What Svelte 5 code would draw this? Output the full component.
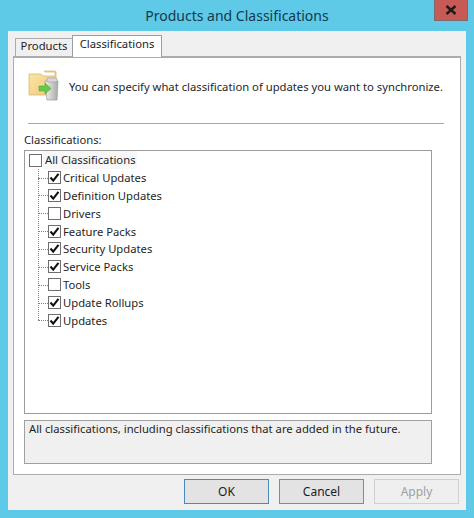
<script>
  const items = [
    ['Critical Updates', true],
    ['Definition Updates', true],
    ['Drivers', false],
    ['Feature Packs', true],
    ['Security Updates', true],
    ['Service Packs', true],
    ['Tools', false],
    ['Update Rollups', true],
    ['Updates', true]
  ];
</script>

<div class="window">
  <header class="titlebar">
    <span class="title">Products and Classifications</span>
    <button class="close" aria-label="Close">
      <svg width="12" height="10" viewBox="0 0 12 10"><path d="M1.5 1 L10.5 9 M10.5 1 L1.5 9" stroke="#1c1c1c" stroke-width="2.4" fill="none"/></svg>
    </button>
  </header>
  <div class="client">
    <div class="tabs">
      <div class="tab">Products</div>
      <div class="tab active">Classifications</div>
    </div>
    <section class="panel">
      <div class="intro">
        <svg class="icon" width="32" height="32" viewBox="0 0 32 32">
          <defs>
            <linearGradient id="fold" x1="0" y1="0" x2="1" y2="1"><stop offset="0" stop-color="#fbe6a8"/><stop offset="1" stop-color="#f0c878"/></linearGradient>
            <linearGradient id="bin" x1="0" y1="0" x2="1" y2="0"><stop offset="0" stop-color="#f2f2f0"/><stop offset="1" stop-color="#a8aaa8"/></linearGradient>
          </defs>
          <path d="M1 5 H13 L15 7 H27 V3 H17 L16 2 H27 Q28 2 28 3 V26 H1 Z" fill="url(#fold)" stroke="#d8b878" stroke-width="0.8"/>
          <path d="M17 12 H30 L29 31 H19 Z" fill="url(#bin)" stroke="#9a9c9a" stroke-width="0.7"/>
          <rect x="19" y="9" width="10" height="4" rx="1" fill="#d8d8d6" stroke="#9a9c9a" stroke-width="0.6"/>
          <path d="M11 17 H17 V14 L23 19.5 L17 25 V22 H11 Z" fill="#68c848" stroke="#4a9c34" stroke-width="0.5"/>
        </svg>
        <p>You can specify what classification of updates you want to synchronize.</p>
      </div>
      <hr />
      <div class="label">Classifications:</div>
      <div class="tree">
        <div class="root">
          <span class="box"></span>
          <span class="root-text">All Classifications</span>
        </div>
        <ul>
          {#each items as [name, checked]}
            <li>
              <span class="box">
                {#if checked}
                  <svg width="11" height="11" viewBox="0 0 11 11"><path d="M1.5 5.5 L4.2 8.6 L9.5 1.8" stroke="#111" stroke-width="2.1" fill="none"/></svg>
                {/if}
              </span>
              <span>{name}</span>
            </li>
          {/each}
        </ul>
      </div>
      <div class="desc">All classifications, including classifications that are added in the future.</div>
    </section>
    <footer class="buttons">
      <button class="btn ok">OK</button>
      <button class="btn">Cancel</button>
      <button class="btn off" disabled>Apply</button>
    </footer>
  </div>
</div>

<style>
  :global(body) { margin: 0; background: #5cc8e8; }
  .window {
    width: 474px; height: 518px; box-sizing: border-box;
    background: #5fc9e8; padding: 0 8px 8px;
    display: flex; flex-direction: column;
    font-family: "Noto Sans", "Open Sans", sans-serif;
    font-size: 11.25px; color: #1f1f1f; overflow: hidden;
  }
  .titlebar { height: 31px; flex: none; position: relative; display: flex; justify-content: center; align-items: center; }
  .title { font-size: 14px; color: #123a4c; }
  .close {
    position: absolute; top: 0; right: -2px; width: 34px; height: 21px; padding: 0;
    background: #c75a55; border: 1px solid #7c6a70; border-top: 0; display: flex; align-items: center; justify-content: center;
  }
  .client { flex: 1; background: #f0f0f0; padding: 3px 5px 0; display: flex; flex-direction: column; min-height: 0; }
  .tabs { display: flex; height: 22px; align-items: flex-end; padding-left: 2px; flex: none; position: relative; z-index: 1; }
  .tab {
    width: 57px; height: 18px; box-sizing: border-box; border: 1px solid #acacac; border-bottom: 0; border-right: 0;
    background: #f0f0f0; text-align: center; line-height: 14px; color: #1c1c1c;
  }
  .tab.active {
    width: 90px; height: 22px; background: #fff; border: 1px solid #9c9c9c; border-bottom: 0; line-height: 16px; margin-bottom: -1px;
  }
  .panel {
    height: 419px; flex: none; box-sizing: border-box; background: #fff; border: 1px solid #acacac; border-top: 2px solid #acacac;
    padding: 0 28px 0 10px; display: flex; flex-direction: column;
  }
  .intro { display: flex; align-items: flex-start; height: 65px; box-sizing: border-box; flex: none; padding: 11px 0 0 4px; gap: 9px; }
  .icon { flex: none; }
  .intro p { margin: 10px 0 0; white-space: nowrap; line-height: 16px; }
  hr { border: 0; height: 1px; background: #a8a8a8; margin: 0 -12px 0 4px; flex: none; }
  .label { height: 26px; line-height: 31px; flex: none; }
  .tree { height: 264px; flex: none; box-sizing: border-box; border: 1px solid #9c9c9c; padding: 0 0 0 4px; }
  .root { height: 18px; display: flex; align-items: center; gap: 1px; }
  .root-text { background: #f7f7f7; padding: 0 1px 0 2px; line-height: 18px; }
  .box {
    width: 13px; height: 13px; box-sizing: border-box; border: 1px solid #6e6e6e; background: #fff;
    display: inline-flex; align-items: center; justify-content: center; flex: none;
  }
  ul { list-style: none; margin: -0.4px 0 0; padding: 0 0 0 9px; position: relative; }
  ul::before { content: ""; position: absolute; left: 9px; top: 0; bottom: 9px; border-left: 1px dotted #808080; }
  li { height: 17.86px; display: flex; align-items: center; gap: 2px; padding-left: 10px; position: relative; }
  li::before { content: ""; position: absolute; left: 0; width: 10px; top: 9px; border-top: 1px dotted #808080; }
  .desc {
    height: 44px; flex: none; box-sizing: border-box; margin-top: 6px; background: #f0f0f0; border: 1px solid #a0a0a0; padding: 0 4px; line-height: 16px;
  }
  .buttons { display: flex; justify-content: flex-end; gap: 10px; padding: 4px 2px 0 0; }
  .btn {
    width: 85px; height: 25px; box-sizing: border-box; padding: 0; font: inherit; font-size: 12px; color: #1c1c1c;
    background: #e3e3e3; border: 1px solid #ababab;
  }
  .ok { border-color: #4a8cb8; }
  .btn:not(.ok):not(.off) { border-color: #8a8a8a; }
  .off { background: #efefef; border-color: #d0d0d0; color: #a0a0a0; }
</style>
